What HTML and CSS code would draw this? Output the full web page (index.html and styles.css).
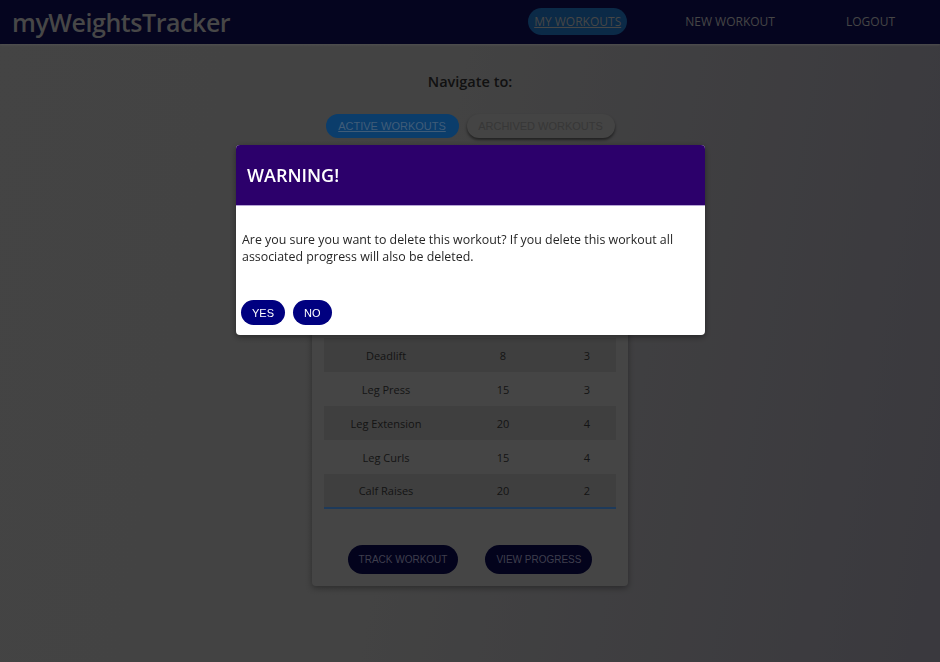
FILE: index.html
```html
<!DOCTYPE html>
<html lang="en">
<head>
<meta charset="utf-8">
<title>myWeightsTracker</title>
<link rel="stylesheet" href="styles.css">
</head>
<body>
<header class="topbar">
  <div class="logo">myWeightsTracker</div>
  <nav class="nav">
    <a class="nav-link active" href="#">MY WORKOUTS</a>
    <a class="nav-link" href="#">NEW WORKOUT</a>
    <a class="nav-link" href="#">LOGOUT</a>
  </nav>
</header>

<main class="content">
  <h2 class="navigate">Navigate to:</h2>
  <div class="tabs">
    <a class="tab tab-active" href="#">ACTIVE WORKOUTS</a>
    <a class="tab tab-archived" href="#">ARCHIVED WORKOUTS</a>
  </div>

  <section class="card">
    <h3 class="card-title">Leg Day</h3>
    <table class="ex-table">
      <thead>
        <tr><th>Exercise</th><th>Reps</th><th>Sets</th></tr>
      </thead>
      <tbody>
        <tr><td>Squat</td><td>10</td><td>4</td></tr>
        <tr><td>Deadlift</td><td>8</td><td>3</td></tr>
        <tr><td>Leg Press</td><td>15</td><td>3</td></tr>
        <tr><td>Leg Extension</td><td>20</td><td>4</td></tr>
        <tr><td>Leg Curls</td><td>15</td><td>4</td></tr>
        <tr><td>Calf Raises</td><td>20</td><td>2</td></tr>
      </tbody>
    </table>
    <div class="card-actions">
      <button class="dark-btn">TRACK WORKOUT</button>
      <button class="dark-btn">VIEW PROGRESS</button>
    </div>
  </section>
</main>

<div class="overlay">
  <div class="modal">
    <div class="modal-head">WARNING!</div>
    <div class="modal-body">
      <p class="modal-text">Are you sure you want to delete this workout? If you delete this workout all associated progress will also be deleted.</p>
      <div class="modal-actions">
        <button class="pill-btn">YES</button>
        <button class="pill-btn">NO</button>
      </div>
    </div>
  </div>
</div>
</body>
</html>
```

FILE: styles.css
```css
* { box-sizing: border-box; }

html, body {
  margin: 0;
  height: 100%;
}

body {
  font-family: "Open Sans", "Noto Sans", sans-serif;
  background: linear-gradient(100deg, #888888 0%, #868686 45%, #74727c 100%);
  overflow: hidden;
}

.topbar {
  height: 44px;
  background: #0a0a3e;
  display: flex;
  align-items: center;
  justify-content: space-between;
  padding: 0 0 0 12px;
  box-shadow: 0 1px 2px rgba(170,170,170,0.8);
}

.logo {
  font-size: 25px;
  font-weight: 600;
  color: #8e8e8e;
  letter-spacing: -0.45px;
  margin-top: -1px;
}

.nav {
  display: flex;
  align-items: center;
  height: 100%;
}

.nav-link {
  font-size: 12px;
  color: #8c8c8c;
  text-decoration: none;
  height: 27px;
  line-height: 27px;
  border-radius: 14px;
  padding: 0 6px;
  margin-top: -1px;
}

.nav-link:nth-child(1) { margin-right: 52px; }
.nav-link:nth-child(2) { margin-right: 59px; }
.nav-link:nth-child(3) { margin-right: 39px; }

.nav-link.active {
  background: #16548e;
  text-decoration: underline;
}

.content {
  display: flex;
  flex-direction: column;
  align-items: center;
}

.navigate {
  margin: 28px 0 0;
  font-size: 14.5px;
  font-weight: 600;
  color: #222;
  line-height: 20px;
}

.tabs {
  display: flex;
  gap: 8px;
  margin-top: 22px;
}

.tab {
  font-family: "Liberation Sans", Arial, sans-serif;
  font-size: 11px;
  height: 24px;
  line-height: 24px;
  border-radius: 12px;
  text-align: center;
}

.tab-active {
  width: 133px;
  background: #167ad6;
  color: #80b8f0;
  text-decoration: underline;
}

.tab-archived {
  width: 148px;
  background: #888;
  color: #6e6e6e;
  text-decoration: none;
  box-shadow: 0 2px 3px rgba(0,0,0,0.5);
}

.card {
  width: 316px;
  margin-top: 14px;
  background: #8b8b8b;
  border-radius: 4px;
  box-shadow: 0 2px 6px rgba(0,0,0,0.35);
  padding: 16px 12px 12px;
}

.card-title {
  margin: 0;
  height: 24px;
  line-height: 24px;
  text-align: center;
  font-size: 15px;
  color: #222;
}

.ex-table {
  width: 100%;
  margin-top: 78px;
  border-collapse: collapse;
  font-size: 11px;
  color: #2a2a2a;
  border-bottom: 2px solid #3c74b4;
}

.ex-table th, .ex-table td {
  height: 34px;
  text-align: center;
  font-weight: 400;
  padding: 0;
}

.ex-table th:nth-child(1), .ex-table td:nth-child(1) { width: 124px; }
.ex-table th:nth-child(2), .ex-table td:nth-child(2) { width: 110px; }

.ex-table tbody tr:nth-child(even) { background: #7f7f7f; }

.card-actions {
  display: flex;
  justify-content: center;
  gap: 27px;
  margin-top: 36px;
}

.dark-btn {
  font-family: "Liberation Sans", Arial, sans-serif;
  font-size: 10px;
  height: 29px;
  border: none;
  border-radius: 15px;
  background: #060638;
  color: #7c7c9a;
  padding: 0 11px;
}

.overlay {
  position: fixed;
  inset: 0;
  background: rgba(0,0,0,0.5);
  display: flex;
  justify-content: center;
  align-items: flex-start;
}

.modal {
  width: 469px;
  margin-top: 145px;
  margin-left: 1px;
  background: #fff;
  border-radius: 4px;
  overflow: hidden;
  box-shadow: 0 2px 6px rgba(0,0,0,0.4);
}

.modal-head {
  height: 61px;
  background: #2c006b;
  color: #fff;
  font-size: 18px;
  font-weight: 600;
  display: flex;
  align-items: center;
  padding-left: 11px;
  border-bottom: 1px solid #b6a4d4;
}

.modal-body {
  padding: 25px 5px 10px;
}

.modal-text {
  margin: 0;
  padding-left: 1px;
  font-size: 12.4px;
  line-height: 17px;
  color: #262626;
}

.modal-actions {
  display: flex;
  gap: 8px;
  margin-top: 35px;
}

.pill-btn {
  font-family: "Liberation Sans", Arial, sans-serif;
  font-size: 11px;
  height: 25px;
  border: none;
  border-radius: 13px;
  background: #000080;
  color: #fff;
  padding: 0 11px;
}
```
